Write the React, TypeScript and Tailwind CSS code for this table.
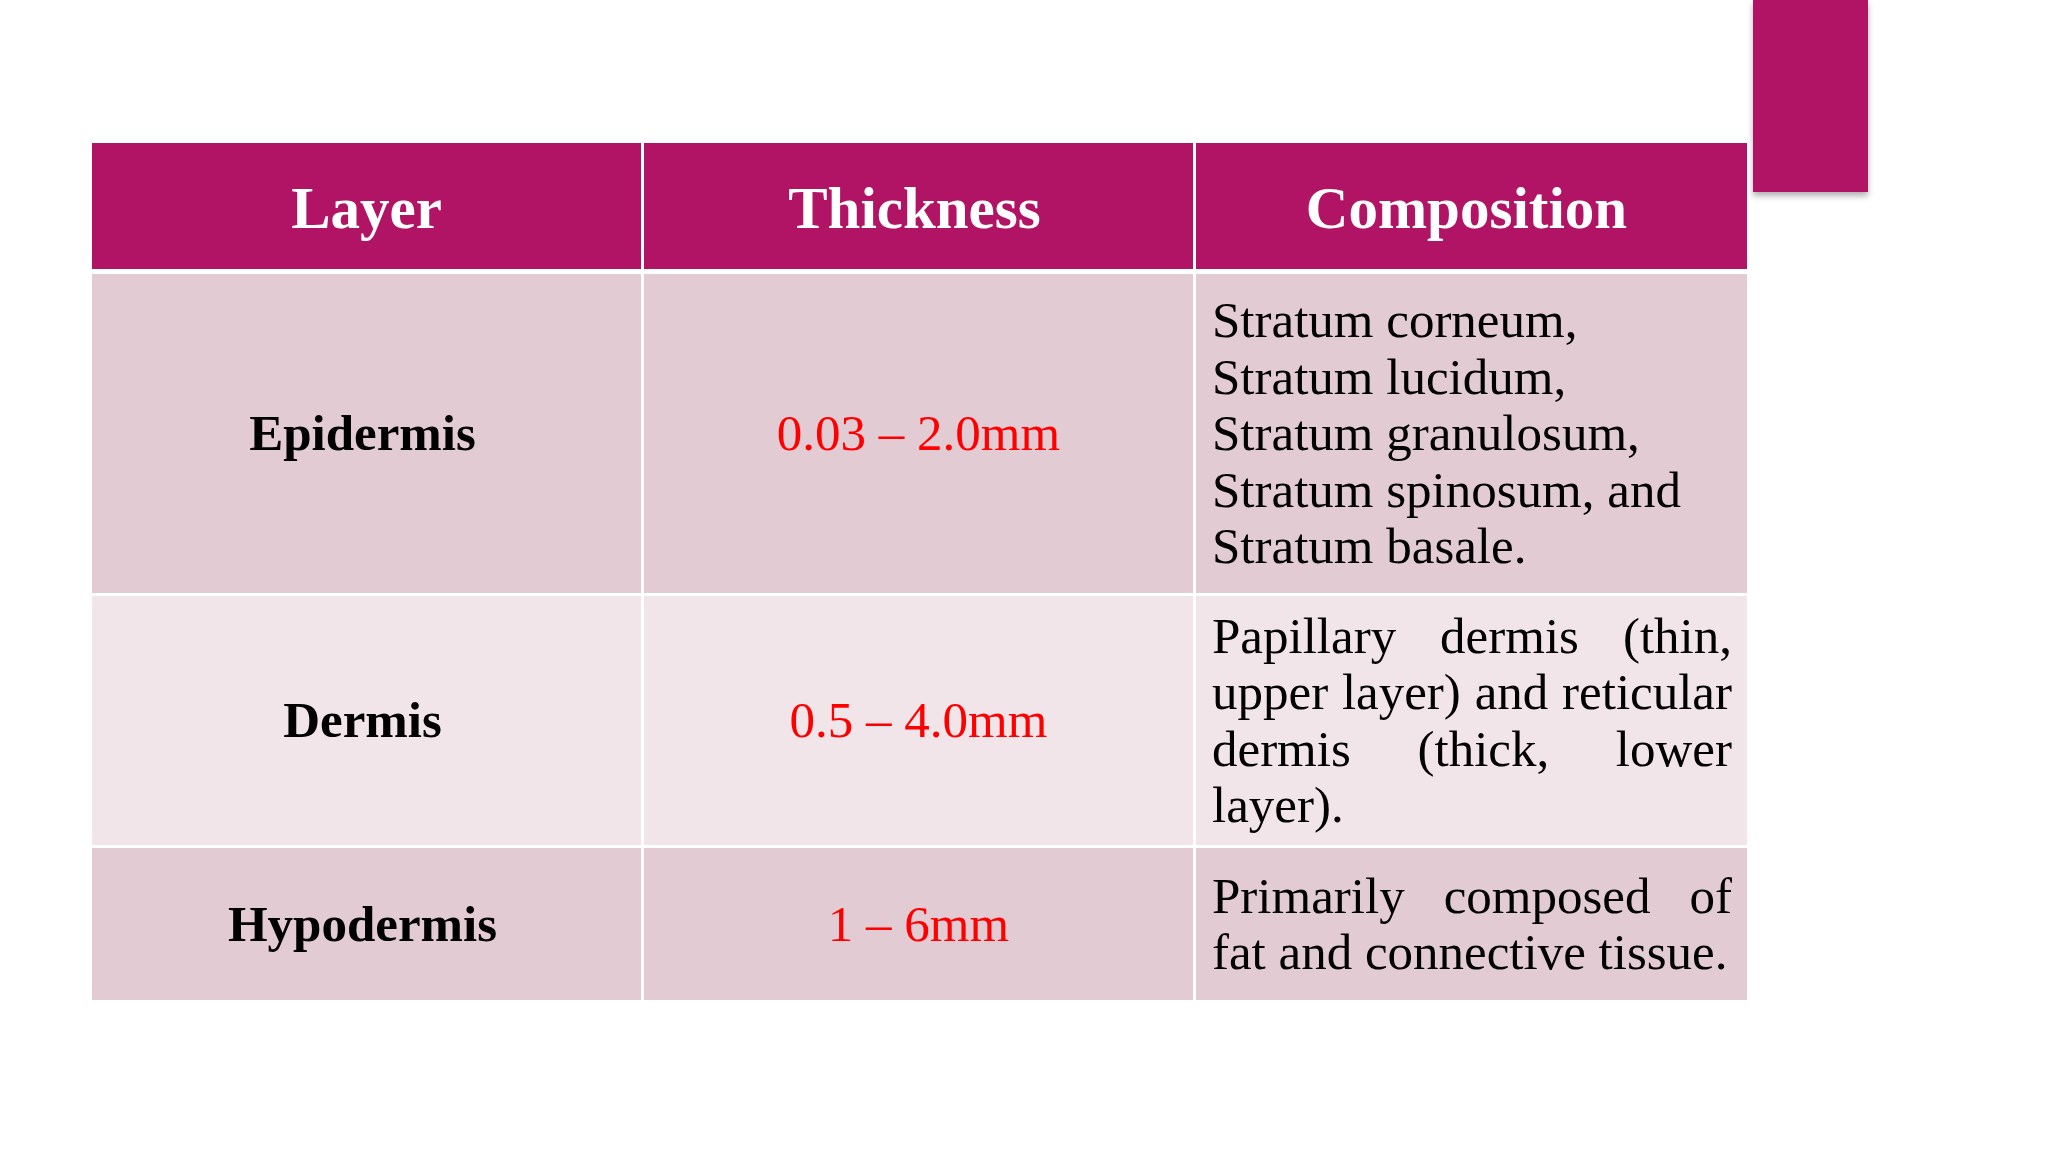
import React from "react";

const serif = "font-['Liberation_Serif','Times_New_Roman',serif]";

function Row({
  bg,
  h,
  layer,
  thick,
  children,
}: {
  bg: string;
  h: string;
  layer: string;
  thick: string;
  children: React.ReactNode;
}) {
  return (
    <div className={`grid grid-cols-[549px_549px_551px] gap-x-[3px] ${h}`}>
      <div className={`${bg} flex items-center justify-center pr-[8px] text-[51px] font-bold text-black leading-[56.5px]`}>
        {layer}
      </div>
      <div className={`${bg} flex items-center justify-center text-[51px] text-[#ff0000] leading-[56.5px]`}>
        {thick}
      </div>
      <div className={`${bg} flex items-center pl-[16px] pr-[15px]`}>
        <p className="w-full text-justify text-[51px] leading-[56.5px] text-black">{children}</p>
      </div>
    </div>
  );
}

export default function App() {
  return (
    <div className={`relative w-[2048px] h-[1152px] overflow-hidden bg-white ${serif}`}>
      <div className="absolute left-[1753px] top-0 w-[115px] h-[192px] bg-[#b21465] shadow-[0_4px_6px_rgba(0,0,0,0.3)]" />
      <div className="pt-[143px] pl-[92px]">
        <div className="flex w-[1655px] flex-col">
          <div className="grid h-[126px] grid-cols-[549px_549px_551px] gap-x-[3px]">
            <div className="flex items-center justify-center bg-[#b21465] pt-[5px] text-[59px] font-bold text-white">Layer</div>
            <div className="flex items-center justify-center bg-[#b21465] pt-[5px] pr-[8px] text-[59px] font-bold text-white">Thickness</div>
            <div className="flex items-center justify-center bg-[#b21465] pt-[5px] pr-[10px] text-[59px] font-bold text-white">Composition</div>
          </div>
          <div className="h-[5px]" />
          <Row bg="bg-[#e3cbd3]" h="h-[319px]" layer="Epidermis" thick="0.03 – 2.0mm">
            Stratum corneum,
            <br />
            Stratum lucidum,
            <br />
            Stratum granulosum,
            <br />
            Stratum spinosum, and
            <br />
            Stratum basale.
          </Row>
          <div className="h-[3px]" />
          <Row bg="bg-[#f2e5ea]" h="h-[249px]" layer="Dermis" thick="0.5 – 4.0mm">
            Papillary dermis (thin, upper layer) and reticular dermis (thick, lower layer).
          </Row>
          <div className="h-[3px]" />
          <Row bg="bg-[#e3cbd3]" h="h-[152px]" layer="Hypodermis" thick="1 – 6mm">
            Primarily composed of fat and connective tissue.
          </Row>
        </div>
      </div>
    </div>
  );
}
